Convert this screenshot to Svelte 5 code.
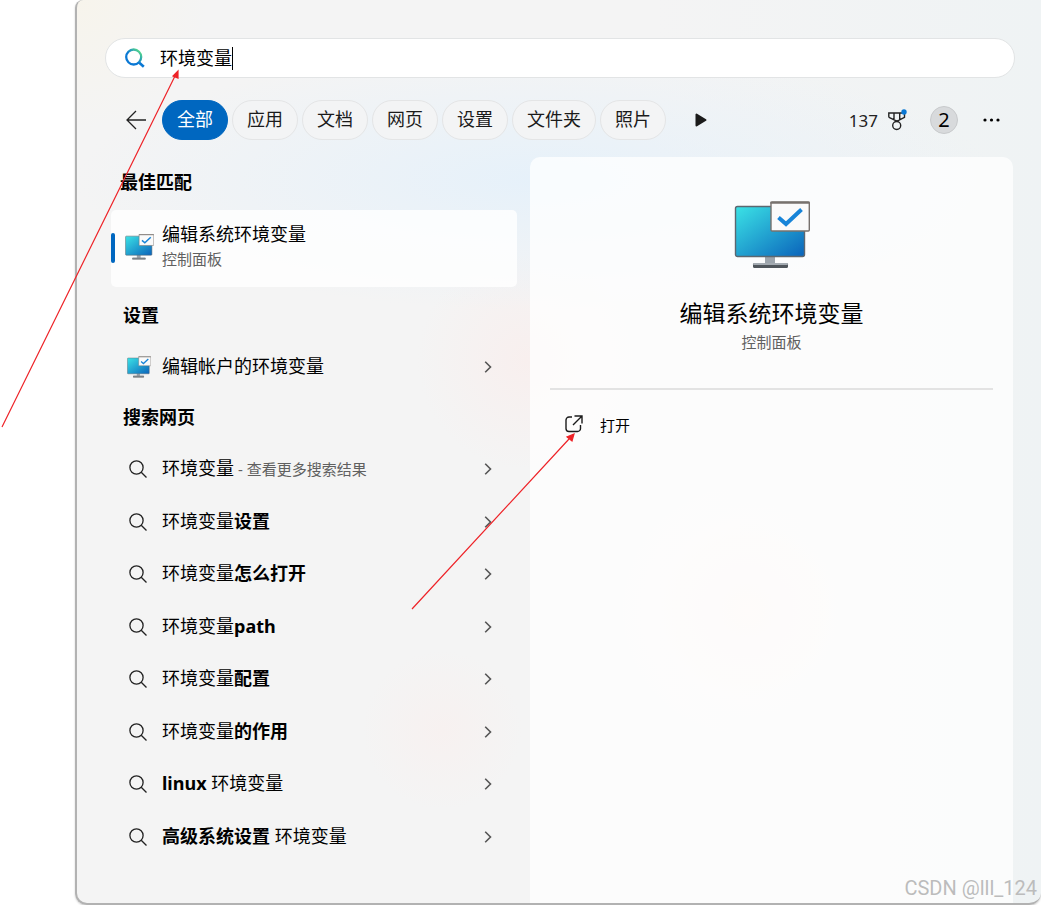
<script lang="ts">
  const tabs = ['全部', '应用', '文档', '网页', '设置', '文件夹', '照片'];

  // bold marks the part of the suggestion that completes the query
  const suggestions = [
    [{ text: '环境变量' }, { text: '- 查看更多搜索结果', hint: true }],
    [{ text: '环境变量' }, { text: '设置', bold: true }],
    [{ text: '环境变量' }, { text: '怎么打开', bold: true }],
    [{ text: '环境变量' }, { text: 'path', bold: true }],
    [{ text: '环境变量' }, { text: '配置', bold: true }],
    [{ text: '环境变量' }, { text: '的作用', bold: true }],
    [{ text: 'linux', bold: true }, { text: ' 环境变量' }],
    [{ text: '高级系统设置', bold: true }, { text: ' 环境变量' }],
  ] as { text: string; bold?: boolean; hint?: boolean }[][];

  let query = $state('环境变量');
  let activeTab = $state('全部');
</script>

{#snippet monitor(cls: string)}
  <svg class={cls} viewBox="0 0 76 68" aria-hidden="true">
    <rect x="31" y="54" width="10" height="9" fill="#9da5ad" />
    <rect x="19" y="62" width="35" height="5" rx="1.5" fill="#50565c" />
    <rect x="19" y="62" width="35" height="2" rx="1" fill="#a4abb2" />
    <rect x="1.500" y="5.500" width="69" height="50" rx="2" fill="url(#screen)" stroke="#5c6770" stroke-width="1.4" />
    <rect x="37" y="1" width="38.3" height="29" rx="1" fill="#fafafa" stroke="#77716d" stroke-width="1.4" />
    <path d="M36.300 1.8h39.4" stroke="#77716d" stroke-width="2" />
    <path d="M44.500 16.500l7.500 6.500L67.500 8.500" fill="none" stroke="#1784d8" stroke-width="4" />
  </svg>
{/snippet}

{#snippet chevron()}
  <svg class="chevron" viewBox="0 0 8 14" aria-hidden="true"><path d="M1.200 1.700L6.500 7l-5.300 5.300" /></svg>
{/snippet}

<svg class="defs" aria-hidden="true">
  <defs>
    <linearGradient id="screen" x1="0" y1="0" x2="1" y2="1">
      <stop offset="0" stop-color="#3be3e6" />
      <stop offset="1" stop-color="#0a63bb" />
    </linearGradient>
    <linearGradient id="lens" x1="0" y1="1" x2="1" y2="0">
      <stop offset="0.45" stop-color="#0a78d4" />
      <stop offset="0.9" stop-color="#55d88a" />
    </linearGradient>
  </defs>
</svg>

<main class="window">
  <label class="search">
    <svg class="search-icon" viewBox="0 0 20 20" aria-hidden="true">
      <path d="M14 14.500l4.800 4.300" stroke="#0a78d4" stroke-width="2.600" />
      <circle cx="8.700" cy="9" r="7.500" fill="none" stroke="url(#lens)" stroke-width="2.300" />
    </svg>
    <input type="text" aria-label="搜索" bind:value={query} />
    <span class="caret"></span>
  </label>

  <nav class="toolbar">
    <button class="icon-button back" aria-label="返回">
      <svg viewBox="0 0 20 20"><path d="M20 10H1M10 1L1 10l9 9" fill="none" stroke="#222" stroke-width="1.300" /></svg>
    </button>
    <div class="tabs">
      {#each tabs as tab}
        <button class="tab" class:active={tab === activeTab} onclick={() => (activeTab = tab)}>{tab}</button>
      {/each}
    </div>
    <button class="icon-button more-tabs" aria-label="更多">
      <svg viewBox="0 0 12 14"><path d="M1.500 1.500v11L10.500 7z" fill="#1b1b1b" stroke="#1b1b1b" stroke-width="2" stroke-linejoin="round" /></svg>
    </button>
    <div class="account">
      <button class="rewards">
        137
        <svg viewBox="0 0 20 22" aria-hidden="true">
          <g fill="none" stroke="#222" stroke-width="1.400">
            <path d="M1.800 4h15.700v4.300L10 12.200 2.500 8.700a1.200 1.200 0 0 1-.7-1.100zM7 4v6.800M12.700 4v6.800" />
            <circle cx="9.700" cy="16.500" r="4" />
          </g>
          <circle cx="17" cy="3" r="2.700" fill="#0a78d4" />
        </svg>
      </button>
      <button class="avatar">2</button>
      <button class="icon-button options" aria-label="选项">
        <svg viewBox="0 0 18 4"><circle cx="2" cy="2" r="1.600" /><circle cx="8.500" cy="2" r="1.600" /><circle cx="15" cy="2" r="1.600" /></svg>
      </button>
    </div>
  </nav>

  <div class="columns">
    <section class="results">
      <h2 class="best-title">最佳匹配</h2>
      <button class="best">
        {@render monitor('icon-medium')}
        <span class="best-text">
          <span>编辑系统环境变量</span>
          <small>控制面板</small>
        </span>
      </button>

      <h2 class="settings-title">设置</h2>
      <button class="row">
        {@render monitor('icon-small')}
        <span class="label">编辑帐户的环境变量</span>
        {@render chevron()}
      </button>

      <h2>搜索网页</h2>
      <ul>
        {#each suggestions as parts}
          <li>
            <button class="row">
              <svg class="lens" viewBox="0 0 18 18" aria-hidden="true">
                <circle cx="7.500" cy="7.500" r="6.600" /><path d="M12.200 12.200l5.300 5.300" />
              </svg>
              <span class="label">{#each parts as part}<span class:bold={part.bold} class:hint={part.hint}>{part.text}</span>{/each}</span>
              {@render chevron()}
            </button>
          </li>
        {/each}
      </ul>
    </section>

    <section class="detail">
      {@render monitor('icon-large')}
      <h1>编辑系统环境变量</h1>
      <p>控制面板</p>
      <hr />
      <button class="open">
        <svg viewBox="0 0 18 18" aria-hidden="true">
          <path d="M7 2H4a3 3 0 0 0-3 3v8.500a3 3 0 0 0 3 3h8.500a3 3 0 0 0 3-3V10M9.500 1H17v7.500M17 1L8 10" />
        </svg>
        打开
      </button>
    </section>
  </div>
</main>

<!-- hand-drawn pointers laid over the window -->
<svg class="pointers" aria-hidden="true">
  <path d="M2 427L175 76M412 609L569 439" />
  <path class="head" d="M178 71v7l-5-2zM574 434l-2 7-5-4z" />
</svg>
<span class="watermark">CSDN @lll_124</span>

<style>
  :global(body) {
    background: #fff;
  }

  .window, .window button, .window input {
    font-family: 'Noto Sans', 'Noto Sans CJK SC', sans-serif;
    font-size: 18px;
    color: #000;
  }

  .window {
    box-sizing: border-box;
    min-height: calc(100vh - 1px);
    margin-left: 75px;
    padding: 38px 26px 0 28px;
    border: 2px solid #b2b2b2;
    border-top: 0;
    border-right-width: 0;
    border-radius: 8px 0 12px 12px;
    display: flex;
    flex-direction: column;
    background:
      radial-gradient(circle at 0 0, #f7f4ec 0, #f7f4ec00 130px),
      radial-gradient(ellipse 460px 130px at 460px 180px, #e6f1fa 0, #e6f1fa00 100%),
      radial-gradient(circle at 450px 360px, #f8efee 0, #f8efee00 110px),
      radial-gradient(circle at 365px 730px, #f7f1f0 0, #f7f1f000 80px),
      radial-gradient(circle at 670px 610px, #f9eeeb 0, #f9eeeb00 130px),
      linear-gradient(90deg, #f4f4f4 60%, #eff3f4);
    box-shadow: 0 1px 2px #ccc;
  }

  .window button {
    border: 0;
    padding: 0;
    background: none;
    text-align: left;
  }

  svg { flex: none; }
  .defs { position: absolute; width: 0; height: 0; }

  .search {
    box-sizing: border-box;
    height: 40px;
    display: flex;
    align-items: center;
    padding-left: 19px;
    border: 1px solid #e2e4e5;
    border-radius: 20px;
    background: #fff;
  }
  .search-icon { width: 20px; height: 20px; margin-right: 15px; }
  .search input {
    field-sizing: content;
    height: 26px;
    padding: 0 0 2px;
    border: 0;
    outline: 0;
    background: none;
    caret-color: transparent;
  }
  .caret { width: 1px; height: 23px; background: #000; }

  .toolbar {
    display: flex;
    align-items: center;
    height: 40px;
    margin: 22px 0 17px;
  }
  .toolbar svg { display: block; }
  .back { margin: 0 16px 0 21px; }
  .back svg { width: 20px; height: 20px; }
  .tabs { display: flex; gap: 4px; }
  .window .tab {
    height: 40px;
    padding: 0 14px 4px;
    border: 1px solid #e4e5e6;
    border-radius: 20px;
    background: #f3f4f5;
    color: #1b1b1b;
    white-space: nowrap;
  }
  .window .tab.active { background: #0067c0; border-color: #0067c0; color: #fff; }
  .more-tabs { margin-left: 29px; }
  .more-tabs svg { width: 12px; height: 14px; }
  .account {
    display: flex;
    align-items: center;
    margin-left: auto;
    padding-right: 14px;
  }
  .window .rewards { display: flex; align-items: center; gap: 9px; font-size: 17px; color: #222; }
  .rewards svg { width: 20px; height: 22px; }
  .window .avatar {
    width: 28px;
    height: 28px;
    margin: 0 25px 0 23px;
    border: 1px solid #c8cacc;
    border-radius: 50%;
    background: #d8dadc;
    font-size: 20px;
    line-height: 26px;
    text-align: center;
  }
  .options svg { width: 18px; height: 4px; }

  .columns {
    flex: 1;
    display: grid;
    grid-template-columns: minmax(0, 406fr) minmax(0, 483fr);
    gap: 13px;
    padding: 0 2px 0 6px;
  }

  h2 {
    height: 51px;
    margin: 0;
    padding-left: 12px;
    font-size: 18px;
    line-height: 50px;
  }
  .best-title { padding-left: 9px; margin-bottom: 2px; }
  .settings-title { margin-top: 3px; }

  .window .best {
    position: relative;
    display: flex;
    width: 100%;
    height: 77px;
    padding: 11px 14px;
    border-radius: 5px;
    background: #fffc;
  }
  .best::before {
    content: '';
    position: absolute;
    left: 0;
    top: 23px;
    width: 4px;
    height: 30px;
    border-radius: 2px;
    background: #0067c0;
  }
  .icon-medium { width: 29px; height: 26px; margin: 13px 8px 0 0; }
  .icon-small { width: 24px; height: 22px; margin: 0 11px 0 16px; }
  .best-text { display: flex; flex-direction: column; line-height: 26px; }
  small { font-size: 15px; line-height: 24px; color: #606060; }

  .row { display: flex; align-items: center; width: 100%; height: 51px; }
  .label {
    flex: 1;
    padding-bottom: 2px;
    line-height: 26px;
    white-space: pre;
  }
  .bold { font-weight: bold; }
  .hint { margin-left: 4px; font-size: 15px; color: #606060; }
  .chevron { width: 8px; height: 14px; margin-right: 25px; }
  .chevron path { fill: none; stroke: #555; stroke-width: 1.6; }
  .lens { width: 18px; height: 18px; margin: 0 15px 0 18px; fill: none; stroke: #222; stroke-width: 1.3; }

  ul {
    display: grid;
    grid-auto-rows: 1fr;
    align-items: center;
    height: 420px;
    margin: 0;
    padding: 0;
    list-style: none;
  }

  .detail {
    display: flex;
    flex-direction: column;
    align-items: center;
    padding: 44px 20px 0;
    border-radius: 10px 10px 0 0;
    background: #ffffffbf;
  }
  .icon-large { width: 76px; height: 68px; }
  h1 {
    margin: 27px 0 0;
    font-size: 23px;
    font-weight: normal;
    line-height: 34px;
  }
  p { margin: 0; font-size: 15px; line-height: 24px; color: #606060; }
  hr { width: 100%; height: 2px; margin: 34px 0 22px; border: 0; background: #e3e3e3; }
  .window .open {
    align-self: flex-start;
    display: flex;
    align-items: center;
    gap: 17px;
    height: 24px;
    padding-left: 15px;
    font-size: 15px;
  }
  .open svg { width: 18px; height: 18px; fill: none; stroke: #1b1b1b; stroke-width: 1.4; }

  .pointers {
    position: absolute;
    left: 0;
    top: 0;
    width: 600px;
    height: 620px;
    pointer-events: none;
    fill: none;
    stroke: #ee2328;
    stroke-width: 1.2;
  }
  .head { fill: #ee2328; }
  .watermark {
    position: absolute;
    right: 4px;
    top: 876px;
    font-family: Roboto, sans-serif;
    font-size: 20px;
    line-height: 24px;
    color: #bcbcbc;
  }
</style>
